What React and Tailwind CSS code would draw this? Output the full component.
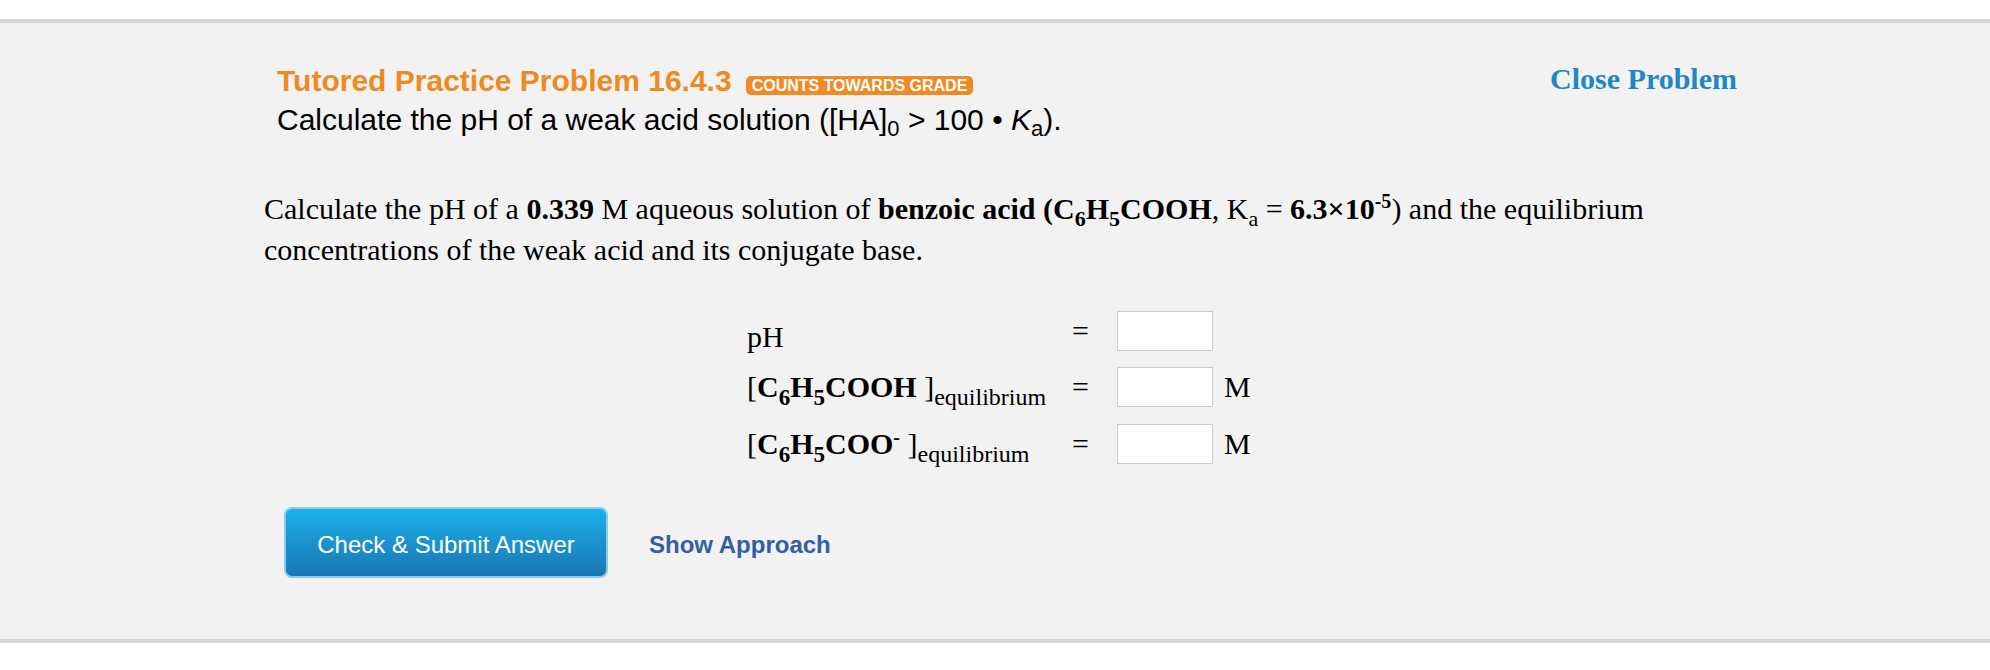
export default function App() {
  return (
    <div className="h-[670px] w-[1990px] bg-white">
      <div className="h-[19px]" />
      <div className="h-[624px] border-y-4 border-[#d6d6d6] bg-[#f2f2f2] pl-[264px]">
        {/* heading row */}
        <header className="flex items-start justify-between pl-[13px] pr-[253px] pt-[41px]">
          <div className="font-['Liberation_Sans',Arial,sans-serif]">
            <h2 className="text-[30px] font-bold leading-[34px] text-[#ee8a22]">
              Tutored Practice Problem 16.4.3
              <span className="ml-[14px] inline-block rounded-[5px] bg-[#ef8a24] px-[6px] align-baseline text-[16px] leading-[19px] text-white">
                COUNTS TOWARDS GRADE
              </span>
            </h2>
            <p className="mt-[5px] text-[30px] leading-[34px] text-black">
              Calculate the pH of a weak acid solution ([HA]
              <span className="relative top-[6px] text-[22px] leading-none">0</span> &gt; 100 • <i>K</i>
              <span className="relative top-[6px] text-[22px] leading-none">a</span>).
            </p>
          </div>
          <a
            href="#"
            className="-mt-[2px] font-['Liberation_Serif',serif] text-[30px] font-bold leading-[34px] text-[#1f87c4]"
          >
            Close Problem
          </a>
        </header>

        {/* question */}
        <p className="mt-[51px] w-[1480px] font-['Liberation_Serif',serif] text-[30px] leading-[41px] text-black">
          Calculate the pH of a <b>0.339</b> M aqueous solution of <b>benzoic acid</b>{" "}
          <b>
            (C<span className="relative top-[7px] text-[22px] leading-none">6</span>H
            <span className="relative top-[7px] text-[22px] leading-none">5</span>COOH
          </b>
          , K<span className="relative top-[7px] text-[22px] leading-none">a</span> ={" "}
          <b>
            6.3×10<span className="relative -top-[11px] text-[20px] leading-none">-5</span>
          </b>
          ) and the equilibrium concentrations of the weak acid and its conjugate base.
        </p>

        {/* answer table */}
        <div className="ml-[483px] mt-[41px] flex flex-col font-['Liberation_Serif',serif] text-[30px] leading-[40px] text-black">
          <div className="flex h-[40px] items-start">
            <div className="w-[325px] pt-[6px]">pH</div>
            <div className="w-[45px]">=</div>
            <input className="h-[40px] w-[96px] border border-[#cbcbcb] bg-white" />
          </div>
          <div className="mt-[16px] flex h-[40px] items-start">
            <div className="w-[325px] whitespace-nowrap">
              [<b>C<span className="relative top-[8px] text-[23px] leading-none">6</span>H
              <span className="relative top-[8px] text-[23px] leading-none">5</span>COOH</b> ]
              <span className="relative top-[8px] text-[24px] leading-none">equilibrium</span>
            </div>
            <div className="w-[45px]">=</div>
            <input className="h-[40px] w-[96px] border border-[#cbcbcb] bg-white" />
            <div className="ml-[11px]">M</div>
          </div>
          <div className="mt-[17px] flex h-[40px] items-start">
            <div className="w-[325px] whitespace-nowrap">
              [<b>C<span className="relative top-[8px] text-[23px] leading-none">6</span>H
              <span className="relative top-[8px] text-[23px] leading-none">5</span>COO
              <span className="relative -top-[10px] text-[20px] leading-none">-</span></b> ]
              <span className="relative top-[8px] text-[24px] leading-none">equilibrium</span>
            </div>
            <div className="w-[45px]">=</div>
            <input className="h-[40px] w-[96px] border border-[#cbcbcb] bg-white" />
            <div className="ml-[11px]">M</div>
          </div>
        </div>

        {/* actions */}
        <div className="ml-[20px] mt-[43px] flex items-center font-['Liberation_Sans',Arial,sans-serif]">
          <button className="flex h-[71px] w-[324px] items-center justify-center rounded-[8px] border-2 border-[#86cdee] bg-linear-to-b from-[#1cb0ea] to-[#1977b2] pt-[4px] text-[24px] text-white">
            Check &amp; Submit Answer
          </button>
          <a href="#" className="ml-[41px] pt-[4px] text-[24px] font-bold text-[#315ea4]">
            Show Approach
          </a>
        </div>
      </div>
    </div>
  );
}
